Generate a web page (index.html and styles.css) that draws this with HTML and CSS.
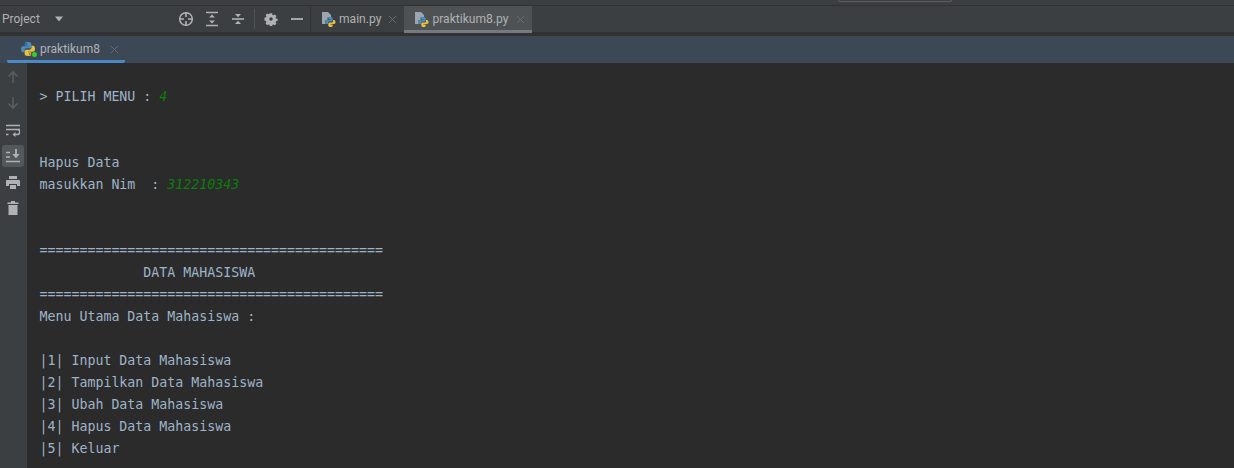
FILE: index.html
```html
<!DOCTYPE html>
<html lang="en">
<head>
<meta charset="utf-8">
<title>praktikum8</title>
<link rel="stylesheet" href="styles.css">
</head>
<body>
<svg class="defs" width="0" height="0" aria-hidden="true">
  <defs>
    <symbol id="py" viewBox="0 0 16 16">
      <path fill="#4b8bbe" d="M7.9 1C5 1 4.8 2 4.8 3v1.700H8v.6H3C1.700 5.300 1 6.400 1 8.200s.8 3 2 3h1.500V9.400c0-1.200 1-2.100 2.200-2.100h3c1 0 1.700-.8 1.700-1.800V3c0-1.100-1.100-2-3.500-2z"/>
      <path fill="#e8bf3f" d="M8.100 15c2.900 0 3.100-1 3.100-2v-1.700H8v-.6h5c1.300 0 2-1.100 2-2.900s-.8-3-2-3h-1.500v1.800c0 1.200-1 2.100-2.200 2.100h-3c-1 0-1.700.8-1.700 1.800V13c0 1.100 1.100 2 3.500 2z"/>
      <circle cx="6.200" cy="2.900" r=".7" fill="#2b2b2b"/>
      <circle cx="9.800" cy="13.100" r=".7" fill="#2b2b2b"/>
    </symbol>
    <symbol id="pyfile" viewBox="0 0 16 16">
      <path fill="#9aa7b0" d="M1 1h6l3 3v2.500H6.500V9H4.500v4H1z"/>
      <path fill="#4b8bbe" d="M9.500 6C7.500 6 7.300 6.700 7.300 7.500v1H9.500V9H6c-1 0-1.500.8-1.500 2s.6 2 1.500 2h1V11.800c0-.9.700-1.400 1.500-1.400h2c.7 0 1.200-.5 1.200-1.200V7.500C11.700 6.700 11 6 9.500 6z"/>
      <path fill="#e8bf3f" d="M9.500 16c2 0 2.200-.7 2.200-1.500v-1H9.500V13H13c1 0 1.500-.8 1.500-2S13.900 9 13 9h-1v1.200c0 .9-.7 1.400-1.500 1.400h-2c-.7 0-1.200.5-1.200 1.200v1.700c0 .8.700 1.500 2.200 1.500z"/>
    </symbol>
  </defs>
</svg>

<header class="top-strip">
  <div class="strip-tab"></div>
</header>

<nav class="tool-bar">
  <div class="project-pane">
    <span class="project-label">Project</span>
    <svg class="caret" width="10" height="6" viewBox="0 0 10 6"><path d="M1 0.500h8L5 5.500z"/></svg>
    <div class="pane-actions">
      <svg class="act act-target" width="16" height="16" viewBox="0 0 16 16"><circle cx="8" cy="8" r="6.300" fill="none" stroke="#afb1b3" stroke-width="1.500"/><path d="M8 1v5M8 10v5M1 8h5M10 8h5" stroke="#afb1b3" stroke-width="1.600"/></svg>
      <svg class="act" width="14" height="16" viewBox="0 0 14 16"><path d="M1 1.500h12M1 14.500h12" stroke="#afb1b3" stroke-width="1.700"/><path d="M7 3.500l3 3H4zM7 12.500l3-3H4z" fill="#afb1b3"/></svg>
      <svg class="act act-last" width="14" height="16" viewBox="0 0 14 16"><path d="M1 8h12" stroke="#afb1b3" stroke-width="1.600"/><path d="M7 6.300l3-3.300H4zM7 9.700l3 3.300H4z" fill="#afb1b3"/></svg>
      <span class="act-sep"></span>
      <svg class="act act-gear" width="14" height="14" viewBox="-1 -1 16 16"><path fill="#afb1b3" fill-rule="evenodd" d="M5.700.500h2.600l.4 1.800 1.100.5 1.600-1 1.800 1.800-1 1.600.5 1.100 1.800.4v2.600l-1.800.4-.5 1.100 1 1.600-1.800 1.800-1.600-1-1.100.5-.4 1.800H5.700l-.4-1.800-1.100-.5-1.600 1L.8 11.900l1-1.600-.5-1.100L-.5 8.800V5.500l1.800-.4.500-1.100-1-1.600 1.800-1.800 1.600 1 1.100-.5zM7 5a2 2 0 1 0 0 4 2 2 0 0 0 0-4z"/></svg>
      <svg class="act" width="12" height="16" viewBox="0 0 12 16"><path d="M0 8h12" stroke="#afb1b3" stroke-width="1.800"/></svg>
    </div>
  </div>
  <div class="editor-tabs">
    <div class="tab">
      <svg class="file-icon" width="16" height="16"><use href="#pyfile"/></svg>
      <span class="tab-name">main.py</span>
      <svg class="close" width="9" height="9" viewBox="0 0 9 9"><path d="M1 1l7 7M8 1L1 8"/></svg>
    </div>
    <div class="tab active">
      <svg class="file-icon" width="16" height="16"><use href="#pyfile"/></svg>
      <span class="tab-name">praktikum8.py</span>
      <svg class="close" width="9" height="9" viewBox="0 0 9 9"><path d="M1 1l7 7M8 1L1 8"/></svg>
    </div>
  </div>
</nav>

<div class="run-bar">
  <div class="run-tab">
    <span class="run-icon">
      <svg width="16" height="16"><use href="#py"/></svg>
      <span class="run-dot"></span>
    </span>
    <span class="run-name">praktikum8</span>
    <svg class="close" width="9" height="9" viewBox="0 0 9 9"><path d="M1 1l7 7M8 1L1 8"/></svg>
  </div>
</div>

<main class="run-body">
  <aside class="side">
    <svg class="side-icon" width="14" height="14" viewBox="0 0 14 14"><path d="M7 13V2M2.500 6.500L7 2l4.500 4.500" fill="none" stroke="#5a5d5f" stroke-width="1.600"/></svg>
    <svg class="side-icon" width="14" height="14" viewBox="0 0 14 14"><path d="M7 1v11M2.500 7.500L7 12l4.500-4.500" fill="none" stroke="#5a5d5f" stroke-width="1.600"/></svg>
    <svg class="side-icon side-wrap" width="14" height="14" viewBox="0 0 14 14"><path d="M0 1.500h14M0 5.500h14M0 10.500h2.500" stroke="#afb1b3" stroke-width="1.500"/><path d="M12 5.500c2.400.3 2.400 5-.5 5H7.500" fill="none" stroke="#afb1b3" stroke-width="1.500"/><path d="M9.500 8v5L6.500 10.500z" fill="#afb1b3"/></svg>
    <span class="side-active">
      <svg width="14" height="14" viewBox="0 0 14 14"><path d="M0 12.500h14M0 3.500h4M0 8h4" stroke="#afb1b3" stroke-width="1.500"/><path d="M10 0v6" stroke="#afb1b3" stroke-width="1.800"/><path d="M6.500 5h7L10 9.500z" fill="#afb1b3"/></svg>
    </span>
    <svg class="side-icon side-print" width="14" height="14" viewBox="0 0 14 14"><path fill="#afb1b3" d="M3 0h8v3H3zM1 4h12a1 1 0 0 1 1 1v5h-3V8H3v2H0V5a1 1 0 0 1 1-1zM4 9h6v4H4z"/></svg>
    <svg class="side-icon" width="14" height="14" viewBox="0 0 14 14"><path fill="#afb1b3" d="M5 0h4v1.500h3.500V3h-11V1.500H5zM2.500 4h9v10h-9z"/></svg>
  </aside>
  <pre class="console"><span class="line">&gt; PILIH MENU : <i class="input">4</i></span>
<span class="line"> </span>
<span class="line"> </span>
<span class="line">Hapus Data</span>
<span class="line">masukkan Nim  : <i class="input">312210343</i></span>
<span class="line"> </span>
<span class="line"> </span>
<span class="line">===========================================</span>
<span class="line">             DATA MAHASISWA</span>
<span class="line">===========================================</span>
<span class="line">Menu Utama Data Mahasiswa :</span>
<span class="line"> </span>
<span class="line">|1| Input Data Mahasiswa</span>
<span class="line">|2| Tampilkan Data Mahasiswa</span>
<span class="line">|3| Ubah Data Mahasiswa</span>
<span class="line">|4| Hapus Data Mahasiswa</span>
<span class="line">|5| Keluar</span></pre>
</main>
</body>
</html>
```
FILE: styles.css
```css
* {
  box-sizing: border-box;
}

html,
body {
  margin: 0;
  height: 468px;
  overflow: hidden;
  background: #2b2b2b;
}

body {
  display: flex;
  flex-direction: column;
  font-family: Roboto, "Liberation Sans", sans-serif;
}

.defs {
  display: block;
  height: 0;
  flex: none;
}

.top-strip {
  height: 6px;
  flex: none;
  background: #3c3f41;
  border-bottom: 1px solid #323232;
  padding-left: 838px;
}

.strip-tab {
  width: 114px;
  height: 2px;
  border: 1px solid #5e6060;
  border-top: 0;
  border-radius: 0 0 3px 3px;
}

.tool-bar {
  height: 26px;
  flex: none;
  display: flex;
  background: #3c3f41;
}

.project-pane {
  width: 311px;
  flex: none;
  display: flex;
  align-items: center;
  padding-left: 2px;
  border-right: 1px solid #323232;
}

.project-label {
  flex: none;
  font-size: 12px;
  color: #afb1b3;
  width: 52px;
}

.caret {
  flex: none;
}

.caret path {
  fill: #afb1b3;
}

.pane-actions {
  display: flex;
  align-items: center;
  margin-left: 114px;
}

.act {
  flex: none;
  margin-right: 12px;
}

.act-target {
  margin-right: 11px;
}

.act-last {
  margin-right: 9px;
}

.act-gear {
  margin-right: 13px;
}

.act-sep {
  flex: none;
  width: 1px;
  height: 20px;
  background: #505254;
  margin-right: 9px;
}

.editor-tabs {
  display: flex;
  height: 26px;
}

.tab {
  display: flex;
  align-items: center;
  height: 26px;
  padding: 0 7px 0 10px;
}

.tab.active {
  position: relative;
  height: 27px;
  background: #4e5254;
  border-bottom: 3px solid #747a80;
  padding-top: 2px;
}

.file-icon {
  flex: none;
  margin-right: 2px;
}

.tab-name {
  font-size: 12.100px;
  color: #afb1b3;
  margin-right: 7px;
}

.close {
  flex: none;
}

.close path {
  stroke: #676a6c;
  stroke-width: 1;
  fill: none;
}

.run-bar {
  height: 31px;
  flex: none;
  background: #3d4856;
  border-top: 4px solid #323232;
  padding-left: 7px;
  display: flex;
}

.run-tab {
  width: 118px;
  height: 27px;
  display: flex;
  align-items: center;
  padding: 2px 0 0 13px;
  border-bottom: 3px solid #4a88c7;
  border-radius: 0 0 2px 2px;
  gap: 4px;
}

.run-icon {
  position: relative;
  display: flex;
  width: 16px;
  height: 16px;
  flex: none;
}

.run-dot {
  position: absolute;
  right: -1px;
  bottom: 0;
  width: 5px;
  height: 5px;
  border-radius: 50%;
  background: #2fd12f;
}

.run-name {
  font-size: 12px;
  color: #afb1b3;
  margin-right: 6px;
}

.run-body {
  flex: 1;
  display: flex;
  min-height: 0;
}

.side {
  width: 27px;
  flex: none;
  background: #3c3f41;
  display: flex;
  flex-direction: column;
  align-items: center;
  padding-top: 7px;
}

.side-icon {
  flex: none;
  display: block;
  margin-bottom: 12px;
  margin-left: -1px;
}

.side-wrap {
  margin-top: 2px;
}

.side-active {
  flex: none;
  width: 22px;
  height: 22px;
  margin: -5px 0 9px -1px;
  border-radius: 3px;
  background: #54585a;
  display: flex;
  align-items: center;
  justify-content: center;
}

.side-print {
  margin-bottom: 11px;
}

.console {
  margin: 0;
  padding: 23px 0 0 12.500px;
  flex: 1;
  font-family: "DejaVu Sans Mono", "Liberation Mono", monospace;
  font-size: 13.270px;
  line-height: 22px;
  color: #9fb3c8;
  background: #2b2b2b;
  white-space: pre;
  overflow: hidden;
}

.line {
  display: inline-block;
  height: 22px;
}

.input {
  color: #0a7d0a;
  font-style: italic;
}
```
